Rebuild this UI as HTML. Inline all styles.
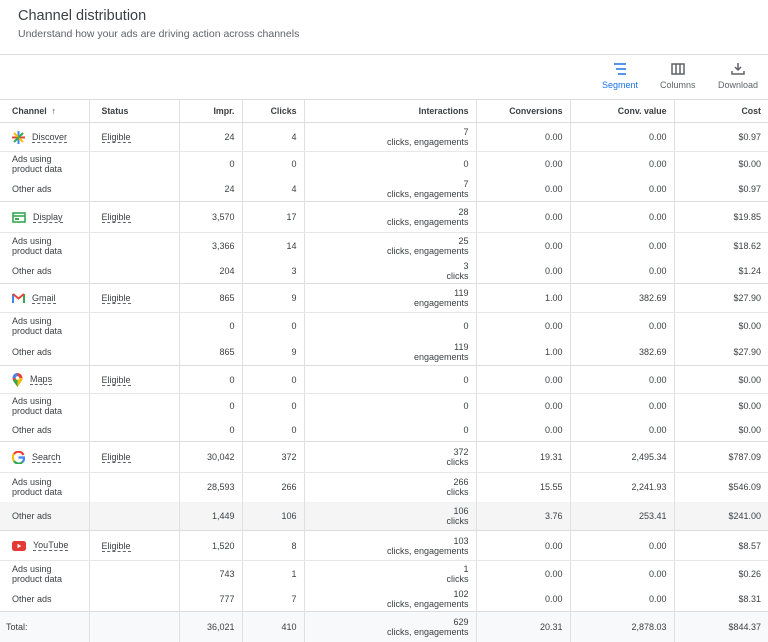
<!DOCTYPE html>
<html><head><meta charset="utf-8"><style>
*{margin:0;padding:0;box-sizing:border-box}
body{width:768px;height:641px;overflow:hidden;background:#fff;font-family:"Liberation Sans",Arial,sans-serif;color:#3c4043;position:relative}
.t{position:absolute;left:18px;top:8px;font-size:14.5px;color:#3c4043}
.s{position:absolute;left:18px;top:28px;font-size:10.5px;color:#5f6368}
.hl{position:absolute;left:0;top:54px;width:768px;height:1px;background:#dadce0}
.tb{position:absolute;top:63px;font-size:9px;color:#5f6368;text-align:center}
.tb svg{display:block;margin:0 auto 5px}
table{position:absolute;top:99px;left:0;width:768px;border-collapse:collapse;table-layout:fixed;font-size:9px}
td{border-left:1px solid #e0e0e0;border-right:1px solid #e0e0e0;padding:0 7px;text-align:right;vertical-align:middle;line-height:10px;color:#3c4043}
td:first-child{border-left:none;text-align:left;padding-left:12px}
td:nth-child(2){text-align:left;padding-left:12px}
td:last-child{border-right:none}
tr.h td{font-weight:bold;color:#3c4043;border-top:1px solid #dadce0;border-bottom:1px solid #dadce0;font-size:8.8px}
tr.g td{border-top:1px solid #dadce0}
tr.c td{border-bottom:1px solid #e8e8e8}
.u{border-bottom:1px dashed #5f6368}
.nm{display:flex;align-items:center}
.nm svg{margin-right:7px;flex:none}
tr.sh td{background:#f5f5f5}
tr.tot td{background:#f8f9fa;border-top:1px solid #dadce0}
</style></head><body>
<div class="t">Channel distribution</div>
<div class="s">Understand how your ads are driving action across channels</div>
<div class="hl"></div>
<div class="tb" style="left:602px;color:#1a73e8"><svg width="14" height="12" viewBox="0 0 14 12"><path d="M1 1h12M3 6h10M5 11h8" stroke="#1a73e8" stroke-width="1.5"/></svg>Segment</div>
<div class="tb" style="left:660px"><svg width="14" height="12" viewBox="0 0 14 12"><rect x="1" y="1" width="12" height="10" fill="none" stroke="#5f6368" stroke-width="1.5"/><path d="M5 1v10M9 1v10" stroke="#5f6368" stroke-width="1.5"/></svg>Columns</div>
<div class="tb" style="left:718px"><svg width="14" height="12" viewBox="0 0 14 12"><path d="M7 0v7M4 4l3 3 3-3M1 8v3h12V8" fill="none" stroke="#5f6368" stroke-width="1.5"/></svg>Download</div>
<table>
<colgroup><col style="width:89px"><col style="width:90px"><col style="width:63px"><col style="width:62px"><col style="width:172px"><col style="width:94px"><col style="width:104px"><col style="width:94px"></colgroup>
<tr class="h" style="height:23px"><td>Channel &nbsp;↑</td><td>Status</td><td>Impr.</td><td>Clicks</td><td>Interactions</td><td>Conversions</td><td>Conv. value</td><td>Cost</td></tr>

<tr class="g c" style="height:29px"><td><span class="nm"><svg width="13" height="13" viewBox="0 0 13 13"><path d="M6.5 0v13" stroke="#4285f4" stroke-width="2"/><path d="M0 6.5h13" stroke="#ea4335" stroke-width="2"/><path d="M2 2l9 9" stroke="#fbbc04" stroke-width="2"/><path d="M11 2l-9 9" stroke="#34a853" stroke-width="2"/></svg><span class="u">Discover</span></span></td><td><span class="u">Eligible</span></td><td>24</td><td>4</td><td>7<br>clicks, engagements</td><td>0.00</td><td>0.00</td><td>$0.97</td></tr>
<tr style="height:25px"><td>Ads using<br>product data</td><td></td><td>0</td><td>0</td><td>0</td><td>0.00</td><td>0.00</td><td>$0.00</td></tr>
<tr style="height:25px"><td>Other ads</td><td></td><td>24</td><td>4</td><td>7<br>clicks, engagements</td><td>0.00</td><td>0.00</td><td>$0.97</td></tr>

<tr class="g c" style="height:31px"><td><span class="nm"><svg width="14" height="11" viewBox="0 0 14 11"><rect x="1" y="1" width="12" height="9" fill="none" stroke="#34a853" stroke-width="1.6"/><path d="M1 4h12" stroke="#34a853" stroke-width="1.6"/><rect x="3" y="6" width="4" height="2" fill="#34a853"/></svg><span class="u">Display</span></span></td><td><span class="u">Eligible</span></td><td>3,570</td><td>17</td><td>28<br>clicks, engagements</td><td>0.00</td><td>0.00</td><td>$19.85</td></tr>
<tr style="height:26px"><td>Ads using<br>product data</td><td></td><td>3,366</td><td>14</td><td>25<br>clicks, engagements</td><td>0.00</td><td>0.00</td><td>$18.62</td></tr>
<tr style="height:25px"><td>Other ads</td><td></td><td>204</td><td>3</td><td>3<br>clicks</td><td>0.00</td><td>0.00</td><td>$1.24</td></tr>

<tr class="g c" style="height:29px"><td><span class="nm"><svg width="13" height="10" viewBox="0 0 13 10"><path d="M1 10V1" stroke="#4285f4" stroke-width="2"/><path d="M12 10V1" stroke="#34a853" stroke-width="2"/><path d="M1 1l5.5 4.5L12 1" fill="none" stroke="#ea4335" stroke-width="2"/></svg><span class="u">Gmail</span></span></td><td><span class="u">Eligible</span></td><td>865</td><td>9</td><td>119<br>engagements</td><td>1.00</td><td>382.69</td><td>$27.90</td></tr>
<tr style="height:26px"><td>Ads using<br>product data</td><td></td><td>0</td><td>0</td><td>0</td><td>0.00</td><td>0.00</td><td>$0.00</td></tr>
<tr style="height:27px"><td>Other ads</td><td></td><td>865</td><td>9</td><td>119<br>engagements</td><td>1.00</td><td>382.69</td><td>$27.90</td></tr>

<tr class="g c" style="height:28px"><td><span class="nm"><svg width="11" height="14" viewBox="0 0 11 14"><path d="M5.5 14C3 10 0.5 8 0.5 5a5 5 0 0 1 10 0c0 3-2.5 5-5 9z" fill="#ea4335"/><path d="M0.5 5a5 5 0 0 1 5-5v5z" fill="#4285f4"/><path d="M5.5 14C4 11.5 2 9.5 1 7.5L5.5 5z" fill="#34a853"/><path d="M10.5 5c0 3-2.5 5-5 9V5z" fill="#fbbc04"/><circle cx="5.5" cy="5" r="1.8" fill="#fff"/></svg><span class="u">Maps</span></span></td><td><span class="u">Eligible</span></td><td>0</td><td>0</td><td>0</td><td>0.00</td><td>0.00</td><td>$0.00</td></tr>
<tr style="height:25px"><td>Ads using<br>product data</td><td></td><td>0</td><td>0</td><td>0</td><td>0.00</td><td>0.00</td><td>$0.00</td></tr>
<tr style="height:23px"><td>Other ads</td><td></td><td>0</td><td>0</td><td>0</td><td>0.00</td><td>0.00</td><td>$0.00</td></tr>

<tr class="g c" style="height:31px"><td><span class="nm"><svg width="13" height="13" viewBox="0 0 13 13"><path d="M11.5 4A5.5 5.5 0 0 0 2 3" fill="none" stroke="#ea4335" stroke-width="2.2"/><path d="M2 3a5.5 5.5 0 0 0 0 7" fill="none" stroke="#fbbc04" stroke-width="2.2"/><path d="M2 10a5.5 5.5 0 0 0 8.5 1" fill="none" stroke="#34a853" stroke-width="2.2"/><path d="M10.5 11A5.5 5.5 0 0 0 12 6.5H6.5" fill="none" stroke="#4285f4" stroke-width="2.2"/></svg><span class="u">Search</span></span></td><td><span class="u">Eligible</span></td><td>30,042</td><td>372</td><td>372<br>clicks</td><td>19.31</td><td>2,495.34</td><td>$787.09</td></tr>
<tr style="height:29px"><td>Ads using<br>product data</td><td></td><td>28,593</td><td>266</td><td>266<br>clicks</td><td>15.55</td><td>2,241.93</td><td>$546.09</td></tr>
<tr class="sh" style="height:29px"><td>Other ads</td><td></td><td>1,449</td><td>106</td><td>106<br>clicks</td><td>3.76</td><td>253.41</td><td>$241.00</td></tr>

<tr class="g c" style="height:30px"><td><span class="nm"><svg width="14" height="10" viewBox="0 0 14 10"><rect width="14" height="10" rx="2.5" fill="#e53935"/><path d="M5.5 2.8v4.4L9.2 5z" fill="#fff"/></svg><span class="u">YouTube</span></span></td><td><span class="u">Eligible</span></td><td>1,520</td><td>8</td><td>103<br>clicks, engagements</td><td>0.00</td><td>0.00</td><td>$8.57</td></tr>
<tr style="height:26px"><td>Ads using<br>product data</td><td></td><td>743</td><td>1</td><td>1<br>clicks</td><td>0.00</td><td>0.00</td><td>$0.26</td></tr>
<tr style="height:25px"><td>Other ads</td><td></td><td>777</td><td>7</td><td>102<br>clicks, engagements</td><td>0.00</td><td>0.00</td><td>$8.31</td></tr>

<tr class="tot" style="height:30px"><td style="padding-left:6px">Total:</td><td></td><td>36,021</td><td>410</td><td>629<br>clicks, engagements</td><td>20.31</td><td>2,878.03</td><td>$844.37</td></tr>
</table>
</body></html>
